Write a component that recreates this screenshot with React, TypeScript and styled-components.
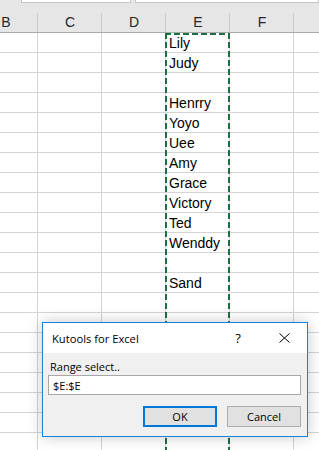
import React from "react";
import styled, { createGlobalStyle } from "styled-components";

const Global = createGlobalStyle`
  html, body { margin: 0; padding: 0; background: #ffffff; }
  body { overflow: hidden; }
`;

const Page = styled.div`
  position: relative;
  width: 319px;
  height: 450px;
  overflow: hidden;
  background: #ffffff;
  font-family: "Liberation Sans", Arial, sans-serif;
`;

const FormulaStrip = styled.div`
  display: flex;
  gap: 4px;
  height: 3px;
  padding-left: 21px;
  background: #e6e6e6;
`;

const FormulaBox = styled.div<{ $w: number }>`
  width: ${(p) => p.$w}px;
  height: 3px;
  background: #ffffff;
  border: 1px solid #c6c6c6;
  border-top: none;
  box-sizing: border-box;
  flex: ${(p) => (p.$w === 0 ? "1" : "none")};
`;

const Sheet = styled.div`
  position: relative;
  margin-left: -26px;
  width: 384px;
  display: grid;
  grid-template-columns: repeat(6, 64px);
  grid-template-rows: 30px;
  grid-auto-rows: 20px;
`;

const HeaderCell = styled.div`
  position: relative;
  height: 30px;
  box-sizing: border-box;
  background: #e6e6e6;
  border-bottom: 1px solid #ababab;
  display: flex;
  align-items: center;
  justify-content: center;
  padding-top: 8px;
  font-size: 14px;
  color: #262626;
  &::after {
    content: "";
    position: absolute;
    right: 0;
    top: 10px;
    bottom: 0;
    width: 1px;
    background: #c8c8c8;
  }
`;

const Cell = styled.div`
  box-sizing: border-box;
  height: 20px;
  border-right: 1px solid #d4d4d4;
  border-bottom: 1px solid #d4d4d4;
  display: flex;
  align-items: flex-end;
  padding: 0 0 1px 3px;
  font-size: 14px;
  line-height: 16px;
  color: #000000;
  white-space: nowrap;
`;

const Marquee = styled.div`
  position: absolute;
  left: 191px;
  top: 30px;
  width: 65px;
  height: 440px;
  pointer-events: none;
  background:
    repeating-linear-gradient(to bottom, #1e6e42 0 6px, transparent 6px 9px) left top / 2px 100% no-repeat,
    repeating-linear-gradient(to bottom, #1e6e42 0 6px, transparent 6px 9px) right top / 2px 100% no-repeat,
    repeating-linear-gradient(to right, #1e6e42 0 6px, transparent 6px 9px) left top / 100% 2px no-repeat;
`;

const Dialog = styled.div`
  position: absolute;
  left: 42px;
  top: 322px;
  width: 266px;
  height: 115px;
  box-sizing: border-box;
  border: 1px solid #1883d7;
  background: #f0f0f0;
  box-shadow: 0 0 14px rgba(0, 0, 0, 0.22);
  display: flex;
  flex-direction: column;
  font-family: "Open Sans", "Liberation Sans", sans-serif;
  font-size: 11px;
  color: #000000;
`;

const TitleBar = styled.div`
  height: 30px;
  background: #ffffff;
  display: flex;
  align-items: center;
  padding-left: 9px;
  padding-right: 17px;
`;

const Title = styled.div`
  flex: 1;
  font-size: 11.2px;
`;

const Help = styled.div`
  width: 10px;
  margin-right: 36px;
  font-size: 13px;
  text-align: center;
`;

const Body = styled.div`
  flex: 1;
  display: flex;
  flex-direction: column;
  padding: 5px 6px 0 5px;
`;

const Label = styled.div`
  padding-left: 2px;
  line-height: 17px;
`;

const Input = styled.div`
  height: 20px;
  box-sizing: border-box;
  border: 1px solid #a8a8a8;
  background: #ffffff;
  display: flex;
  align-items: center;
  padding-left: 4px;
`;

const ButtonRow = styled.div`
  display: flex;
  justify-content: flex-end;
  gap: 10px;
  margin-top: 11px;
`;

const Button = styled.div<{ $primary?: boolean }>`
  width: 74px;
  height: 21px;
  box-sizing: border-box;
  background: #e1e1e1;
  border: ${(p) => (p.$primary ? "2px solid #0078d7" : "1px solid #adadad")};
  display: flex;
  align-items: center;
  justify-content: center;
`;

const rows: string[] = [
  "Lily",
  "Judy",
  "",
  "Henrry",
  "Yoyo",
  "Uee",
  "Amy",
  "Grace",
  "Victory",
  "Ted",
  "Wenddy",
  "",
  "Sand",
  "",
  "",
  "",
  "",
  "",
  "",
  "",
  "",
];

const cols = ["B", "C", "D", "E", "F", "G"];

export default function App() {
  return (
    <Page>
      <Global />
      <FormulaStrip>
        <FormulaBox $w={110} />
        <FormulaBox $w={0} />
      </FormulaStrip>
      <Sheet>
        {cols.map((c) => (
          <HeaderCell key={c}>{c === "G" ? "" : c}</HeaderCell>
        ))}
        {rows.map((name, r) =>
          cols.map((c) => <Cell key={`${r}-${c}`}>{c === "E" ? name : ""}</Cell>)
        )}
        <Marquee />
      </Sheet>
      <Dialog>
        <TitleBar>
          <Title>Kutools for Excel</Title>
          <Help>?</Help>
          <svg width="11" height="10" viewBox="0 0 11 10">
            <path d="M0.5 0.5 L10.5 9.5 M10.5 0.5 L0.5 9.5" stroke="#000" strokeWidth="1" fill="none" />
          </svg>
        </TitleBar>
        <Body>
          <Label>Range select..</Label>
          <Input>$E:$E</Input>
          <ButtonRow>
            <Button $primary>OK</Button>
            <Button>Cancel</Button>
          </ButtonRow>
        </Body>
      </Dialog>
    </Page>
  );
}
